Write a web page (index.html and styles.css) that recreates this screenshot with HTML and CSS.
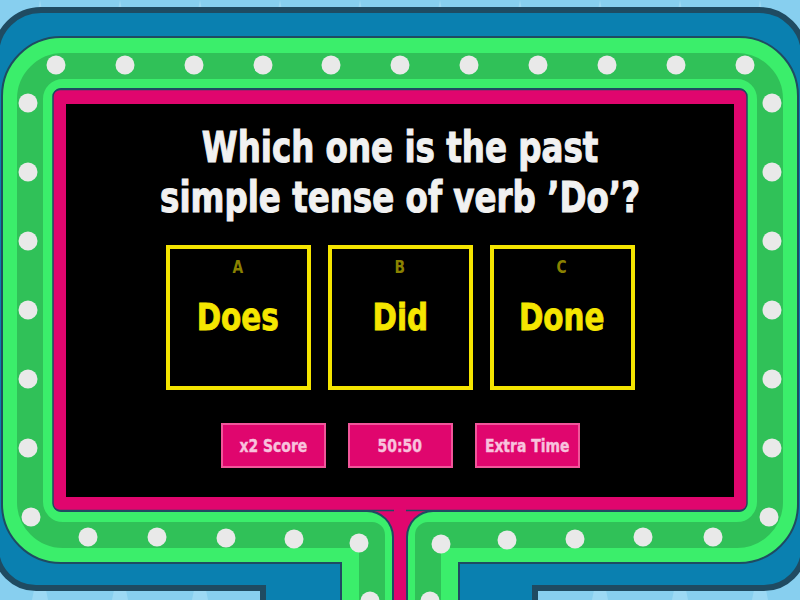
FILE: index.html
```html
<!DOCTYPE html>
<html>
<head>
<meta charset="utf-8">
<title>Quiz</title>
<link rel="stylesheet" href="styles.css">
</head>
<body>
<div class="stage">
  <svg class="frame" width="800" height="600" viewBox="0 0 800 600" aria-hidden="true">
    <defs>
      <pattern id="tri" width="80" height="80" patternUnits="userSpaceOnUse">
        <rect width="80" height="80" fill="#87cfef"/>
        <path d="M40 0 L56 80 L24 80 Z" fill="#9cd9f4"/>
      </pattern>
    </defs>
    <rect width="800" height="600" fill="url(#tri)"/>
    <path d="M-4 55 A45 45 0 0 1 41 10 H759 A45 45 0 0 1 804 55 V548 A40 40 0 0 1 764 588 H535 V640 H263 V588 H36 A40 40 0 0 1 -4 548 Z" fill="#0a80b0" stroke="#1f4b62" stroke-width="6"/>
    <rect x="360" y="500" width="80" height="40" fill="#e0066e"/>
    <rect x="390" y="500" width="20" height="140" fill="#e0066e"/>
    <path d="M367 640 V537 H61 A33 33 0 0 1 28 504 V96 A33 33 0 0 1 61 63 H739 A33 33 0 0 1 772 96 V504 A33 33 0 0 1 739 537 H433 V640" fill="none" stroke="#1f4b62" stroke-width="54" stroke-linejoin="round"/>
    <path d="M367 640 V537 H61 A33 33 0 0 1 28 504 V96 A33 33 0 0 1 61 63 H739 A33 33 0 0 1 772 96 V504 A33 33 0 0 1 739 537 H433 V640" fill="none" stroke="#3bee6b" stroke-width="50" stroke-linejoin="round"/>
    <path d="M372 640 V535 H63 A33 33 0 0 1 30 502 V99 A33 33 0 0 1 63 66 H737 A33 33 0 0 1 770 99 V502 A33 33 0 0 1 737 535 H428 V640" fill="none" stroke="#30c158" stroke-width="26" stroke-linejoin="round"/>
    <g fill="#e9e9e9">
      <circle cx="56" cy="65" r="9.5"/><circle cx="125" cy="65" r="9.5"/><circle cx="194" cy="65" r="9.5"/>
      <circle cx="263" cy="65" r="9.5"/><circle cx="331" cy="65" r="9.5"/><circle cx="400" cy="65" r="9.5"/>
      <circle cx="469" cy="65" r="9.5"/><circle cx="538" cy="65" r="9.5"/><circle cx="607" cy="65" r="9.5"/>
      <circle cx="676" cy="65" r="9.5"/><circle cx="745" cy="65" r="9.5"/>
      <circle cx="28" cy="103" r="9.5"/><circle cx="28" cy="172" r="9.5"/><circle cx="28" cy="241" r="9.5"/>
      <circle cx="28" cy="310" r="9.5"/><circle cx="28" cy="379" r="9.5"/><circle cx="28" cy="448" r="9.5"/>
      <circle cx="31" cy="517" r="9.5"/>
      <circle cx="772" cy="103" r="9.5"/><circle cx="772" cy="172" r="9.5"/><circle cx="772" cy="241" r="9.5"/>
      <circle cx="772" cy="310" r="9.5"/><circle cx="772" cy="379" r="9.5"/><circle cx="772" cy="448" r="9.5"/>
      <circle cx="769" cy="517" r="9.5"/>
      <circle cx="88" cy="537" r="9.5"/><circle cx="157" cy="537" r="9.5"/><circle cx="226" cy="538" r="9.5"/>
      <circle cx="294" cy="539" r="9.5"/><circle cx="359" cy="543" r="9.5"/>
      <circle cx="441" cy="544" r="9.5"/><circle cx="507" cy="540" r="9.5"/><circle cx="575" cy="539" r="9.5"/>
      <circle cx="643" cy="537" r="9.5"/><circle cx="713" cy="537" r="9.5"/>
      <circle cx="370" cy="601" r="9.5"/><circle cx="430" cy="601" r="9.5"/>
    </g>
    <rect x="53" y="89.5" width="694" height="421" rx="7" fill="#e0066e" stroke="#1f4b62" stroke-width="1.5"/>
    <rect x="394" y="505" width="12" height="15" fill="#e0066e"/>
  </svg>

  <main class="screen">
    <h1 class="question">Which one is the past<br>simple tense of verb ’Do’?</h1>
    <div class="answers">
      <div class="answer"><span class="letter">A</span><span class="word">Does</span></div>
      <div class="answer"><span class="letter">B</span><span class="word">Did</span></div>
      <div class="answer"><span class="letter">C</span><span class="word">Done</span></div>
    </div>
    <div class="powerups">
      <button class="power"><span class="power-label">x2 Score</span></button>
      <button class="power"><span class="power-label">50:50</span></button>
      <button class="power"><span class="power-label">Extra Time</span></button>
    </div>
  </main>
</div>
</body>
</html>
```

FILE: styles.css
```css
html, body {
  margin: 0;
  padding: 0;
}

body {
  width: 800px;
  height: 600px;
  overflow: hidden;
  background: #87cfef;
  font-family: "DejaVu Sans Condensed", "DejaVu Sans", sans-serif;
  font-weight: 700;
}

.stage {
  position: relative;
  width: 800px;
  height: 600px;
  box-sizing: border-box;
  padding: 104px 0 0 66px;
}

.frame {
  position: absolute;
  top: 0;
  left: 0;
  display: block;
}

.screen {
  position: relative;
  width: 668px;
  height: 393px;
  background: #000;
  display: flex;
  flex-direction: column;
  align-items: center;
}

.question {
  margin: 19px 0 0;
  font-size: 42px;
  line-height: 50px;
  font-weight: 700;
  color: #f1f1f1;
  text-align: center;
  white-space: nowrap;
  transform: scaleX(0.86);
  -webkit-text-stroke: 1px #f1f1f1;
}

.answers {
  display: flex;
  gap: 17px;
  margin-top: 22px;
}

.answer {
  width: 145px;
  height: 145px;
  box-sizing: border-box;
  border: 4px solid #f5e500;
  padding-top: 8px;
  display: flex;
  flex-direction: column;
  align-items: center;
}

.letter {
  font-size: 17px;
  line-height: 20px;
  color: #8a8200;
  transform: scaleX(0.9);
}

.word {
  margin-top: 18px;
  font-size: 38px;
  line-height: 44px;
  color: #f5e600;
  transform: scaleX(0.86);
  -webkit-text-stroke: 0.8px #f5e600;
}

.powerups {
  display: flex;
  gap: 22px;
  margin-top: 33px;
}

.power {
  width: 105px;
  height: 45px;
  padding: 0;
  box-sizing: border-box;
  background: #e0066e;
  border: 2px solid #f0569a;
  color: #f8c2dd;
  font-family: inherit;
  font-weight: 700;
  font-size: 18px;
  white-space: nowrap;
}

.power-label {
  display: inline-block;
  transform: scaleX(0.86);
  -webkit-text-stroke: 0.4px #f8c2dd;
}
```
